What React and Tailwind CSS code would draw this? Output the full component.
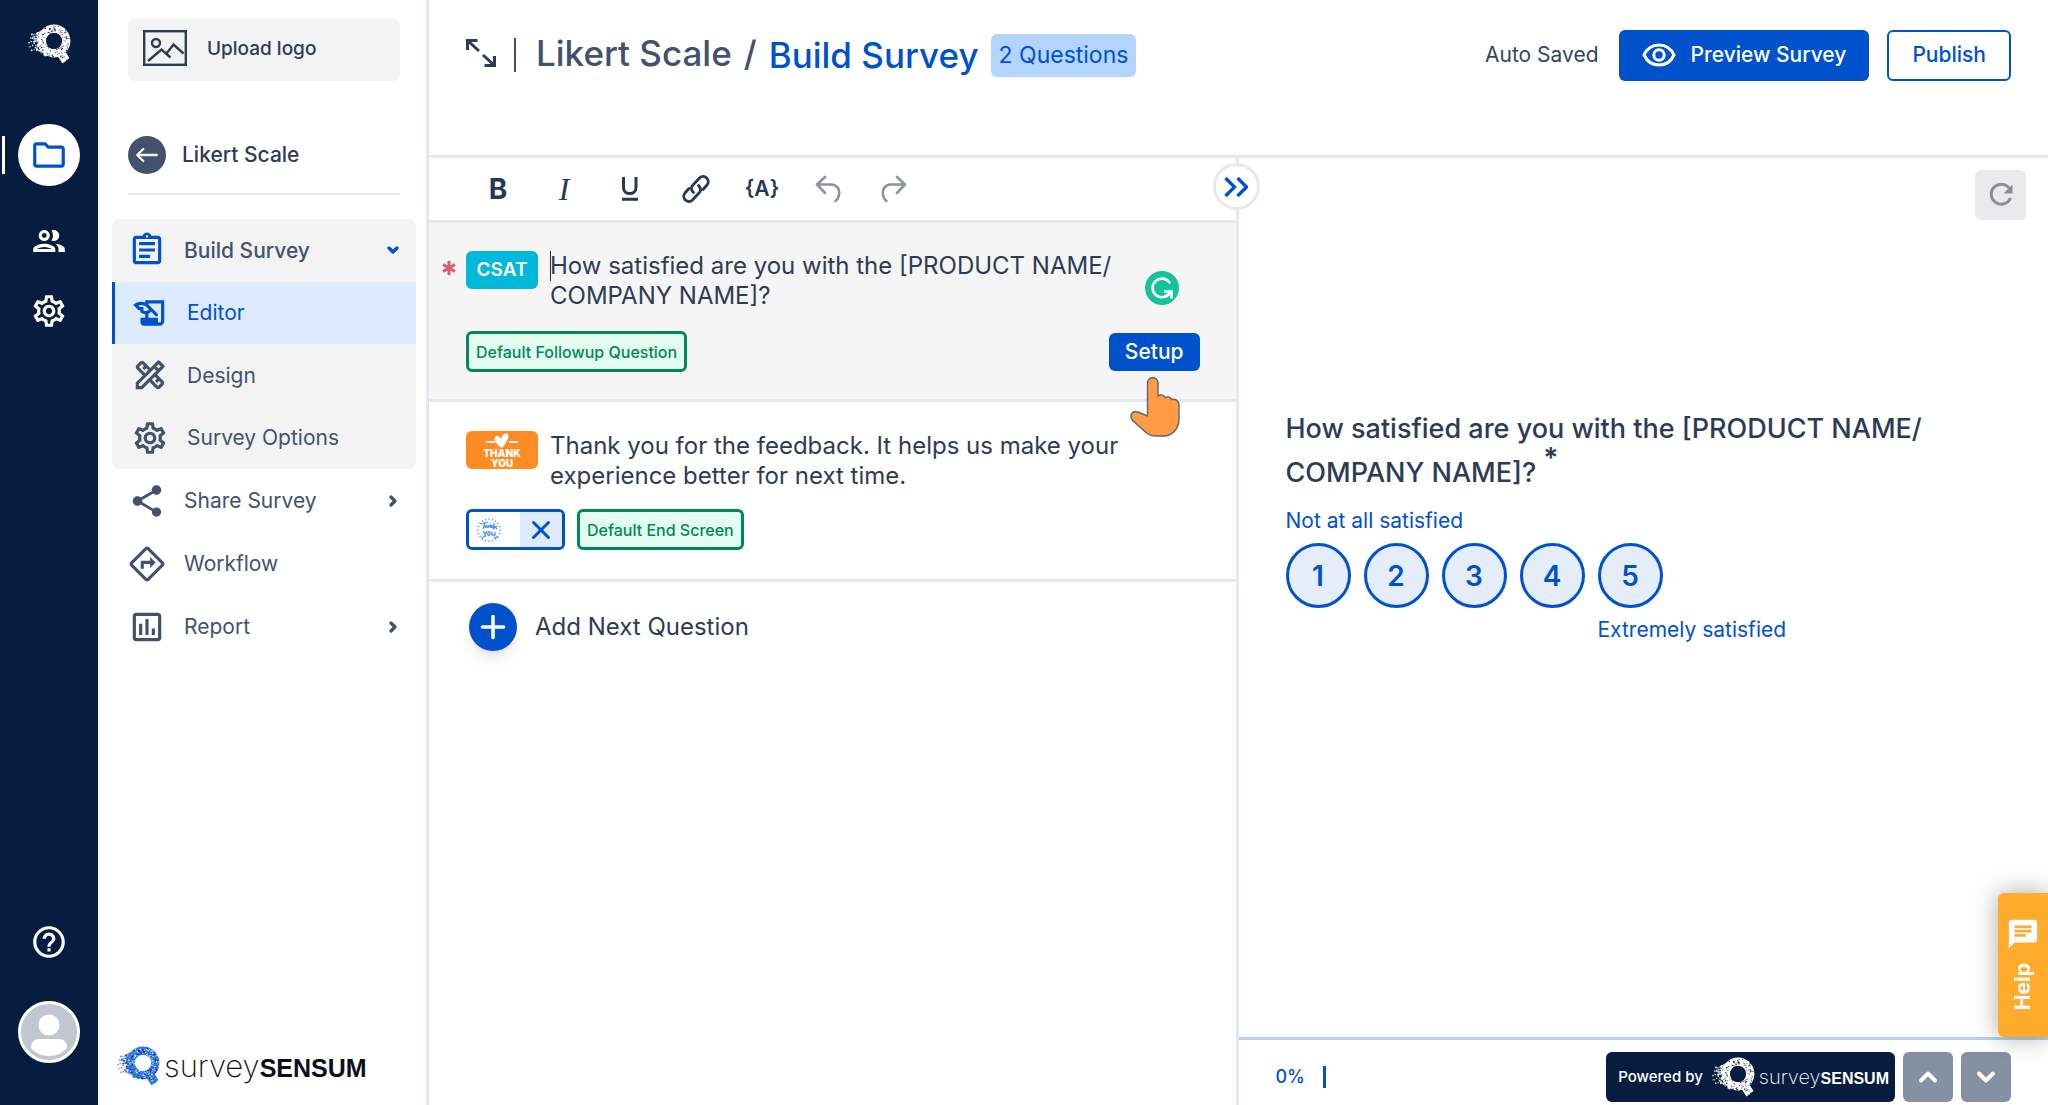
import { useState } from "react";
import clsx from "clsx";
import {
  MdOutlineFolder,
  MdOutlineGroup,
  MdOutlineSettings,
  MdHelpOutline,
  MdOutlineAssignment,
  MdOutlineHistoryEdu,
  MdOutlineDesignServices,
  MdShare,
  MdOutlineDirections,
  MdOutlineAssessment,
  MdChat,
} from "react-icons/md";
import { BsArrowLeft } from "react-icons/bs";
import { ChevronDown, ChevronRight, ChevronUp, Plus, X } from "lucide-react";

// small seeded generator so the logo specks stay the same on every render
function makeRandom(seed) {
  let s = seed;
  return () => {
    s = (s * 16807) % 2147483647;
    return s / 2147483647;
  };
}

function buildSpecks() {
  const rnd = makeRandom(42);
  const trail = [];
  const ring = [];
  for (let i = 0; i < 240; i++) {
    const t = rnd();
    const x = 1 + Math.sqrt(t) * 19;
    const spread = 8 + t * 7;
    const y = 17.5 + (rnd() * 2 - 1) * spread;
    trail.push({ x, y, s: 0.7 + rnd() * 0.9, c: Math.floor(rnd() * 3) });
  }
  for (let i = 0; i < 300; i++) {
    const a = rnd() * Math.PI * 2;
    const r = 8.5 + rnd() * 7.5;
    ring.push({
      x: 26.5 + Math.cos(a) * r,
      y: 16.5 + Math.sin(a) * r,
      s: 0.6 + rnd() * 0.6,
      c: Math.floor(rnd() * 3),
    });
  }
  for (let i = 0; i < 30; i++) {
    const t = rnd();
    ring.push({ x: 31 + t * 6 + rnd() * 4, y: 29 + t * 8, s: 0.6 + rnd() * 0.5, c: Math.floor(rnd() * 3) });
  }
  return { trail, ring };
}

const specks = buildSpecks();

function QLogo({ className, light }) {
  const colors = light ? ["#fff", "#fff", "#fff"] : ["#2f80ed", "#0b1f40", "#60a5fa"];
  const holes = light ? ["#071d40", "#fff", "#fff"] : ["#0b1f40", "#ffffff", "#5ba2fb"];
  const base = light ? "#fff" : "#2f7be8";
  return (
    <svg viewBox="0 0 44 40" className={className} aria-hidden="true">
      {specks.trail.map((p, i) => (
        <rect key={i} x={p.x} y={p.y} width={p.s} height={p.s} fill={colors[p.c]} />
      ))}
      <circle cx="27" cy="17" r="12.2" fill="none" stroke={base} strokeWidth="8.4" />
      <path d="M30 31l8-4 4.500 7-7 5.500z" fill={base} />
      {specks.ring.map((p, i) => (
        <rect key={i} x={p.x} y={p.y} width={p.s} height={p.s} fill={holes[p.c]} />
      ))}
      <circle cx="27" cy="17" r="8" fill={light ? "#071d40" : "#fff"} />
    </svg>
  );
}

function ImageIcon() {
  return (
    <svg viewBox="0 0 44 36" className="h-9 w-11" fill="none" stroke="#2d3b55" strokeWidth="2.4" aria-hidden="true">
      <rect x="1.2" y="1.2" width="41.6" height="33.6" />
      <circle cx="13" cy="13" r="4" />
      <path d="M5 31l13.5-11.5 9 8M23.500 23.500L30.500 14.500l10 9" />
    </svg>
  );
}

function ExpandIcon() {
  return (
    <svg viewBox="0 0 30 28" className="h-7 w-[30px]" fill="none" stroke="#2d3b55" strokeWidth="3" aria-hidden="true">
      <path d="M11.500 1.500H1.500V11M2 2l11 10M18.500 26.500h10V17M28 26L17 16" />
    </svg>
  );
}

function UndoIcon({ flip }) {
  return (
    <svg
      viewBox="0 0 26 28"
      className={clsx("h-7 w-[26px]", flip && "-scale-x-100")}
      fill="none"
      stroke="#8d949e"
      strokeWidth="2.6"
      strokeLinecap="round"
      strokeLinejoin="round"
      aria-hidden="true"
    >
      <path d="M10 2L2 9.500l8 8.500M2 9.500h14c6 0 9 5 8 10-.4 3-1.500 5-3.500 6.500" />
    </svg>
  );
}

function ReloadIcon() {
  return (
    <svg viewBox="0 0 24 24" className="h-6 w-6" aria-hidden="true">
      <path d="M20.500 5.500A10 10 0 1 0 21.500 15" fill="none" stroke="#8b8f94" strokeWidth="3" />
      <path d="M23.500 1.500v9h-9z" fill="#8b8f94" />
    </svg>
  );
}

function EyeIcon() {
  return (
    <svg viewBox="0 0 34 24" className="h-6 w-[34px]" fill="none" stroke="#fff" strokeWidth="3" aria-hidden="true">
      <path d="M2 12C5 5.500 10.500 2 17 2s12 3.500 15 10c-3 6.500-8.500 10-15 10S5 18.500 2 12z" />
      <circle cx="17" cy="12" r="5.200" />
    </svg>
  );
}

function HandIcon() {
  return (
    <svg viewBox="0 0 50 60" className="h-[60px] w-[50px]" aria-hidden="true">
      <path
        d="M17.500 6c0-7 10.500-7 10.500 0v13c3-2 6-1 7 1.500 3-1.500 5.500 0 6.500 2 4-1 7.500 1.500 7.500 5V42c0 10-7 17-15.500 17H26c-4 0-7-1-10-3.500L2.500 43.500C-1.500 38 3 33 8 35l9.500 4z"
        fill="#ff9c43"
        stroke="#5b6472"
        strokeWidth="1.400"
      />
    </svg>
  );
}

function GrammarlyIcon() {
  return (
    <svg viewBox="0 0 34 34" className="size-[34px]" aria-hidden="true">
      <circle cx="17" cy="17" r="17" fill="#15c39a" />
      <path d="M24.500 11.500A9.300 9.300 0 1 0 25 21.500" fill="none" stroke="#fff" strokeWidth="2.600" strokeLinecap="round" />
      <path d="M19 20.500h7.500V27.500" fill="none" stroke="#fff" strokeWidth="2.600" />
    </svg>
  );
}

function HeartMark() {
  return (
    <svg viewBox="0 0 32 16" className="h-4 w-8" aria-hidden="true">
      <path d="M0 10h9M23 10h9" stroke="#fff" strokeWidth="2" />
      <path d="M16 16C9 12 7 6 9.500 4.500c2.500-1.200 4.500.5 5.500 3C15.500 3 19 .5 21.500 1.800 24 4 21 11 16 16z" fill="#fff" />
    </svg>
  );
}

// scribbled "thank you" thumbnail
function ThumbIcon() {
  const rays = Array.from({ length: 20 }, (_, i) => i * 18);
  return (
    <svg viewBox="0 0 24 24" className="size-6" fill="none" stroke="#4b94f2" aria-hidden="true">
      {rays.map((a) => (
        <path key={a} d="M12 0v1.800" strokeWidth="1" transform={`rotate(${a} 12 12)`} />
      ))}
      <path d="M4 6l7-2M8 5L6 11M8 10c1-4 2-3 2 0M11 10c0-3 3-3 2 0M14 10V7l2 3V7M17 5v5l3-2-2 1 2 2" strokeWidth="1.300" />
      <path d="M6 13l2 3 2-3-3 6M11 15c0-2 3-2 2 1s-3 1-2-1M15 14v3h3v-3M4 20l5-2M17 20l4-1" strokeWidth="1.300" />
    </svg>
  );
}

const navItem = "flex size-[62px] items-center justify-center rounded-full";

function IconRail() {
  return (
    <nav className="flex w-[98px] shrink-0 flex-col items-center bg-[#071d40] pb-[42px] text-white">
      <a href="#home" aria-label="Home" className="mt-6">
        <QLogo light className="h-10 w-11" />
      </a>
      <div className="relative mt-[60px] flex w-full justify-center">
        <span className="absolute top-3 left-0.5 h-[38px] w-[3px] bg-white" />
        <a href="#surveys" aria-label="Surveys" className={clsx(navItem, "bg-white text-[#0052cc]")}>
          <MdOutlineFolder size={38} />
        </a>
      </div>
      <a href="#contacts" aria-label="Contacts" className={clsx(navItem, "mt-6")}>
        <MdOutlineGroup size={38} />
      </a>
      <a href="#settings" aria-label="Settings" className={clsx(navItem, "mt-2")}>
        <MdOutlineSettings size={38} />
      </a>
      <div className="mt-auto flex flex-col items-center gap-7">
        <a href="#help" aria-label="Help center" className={navItem}>
          <MdHelpOutline size={38} />
        </a>
        <button aria-label="Account" className="size-[62px] overflow-hidden rounded-full border-[3px] border-white bg-[#c1c7d0]">
          <svg viewBox="0 0 56 56" aria-hidden="true">
            <circle cx="28" cy="21" r="10.5" fill="#fff" />
            <path d="M10 44c0-6 3-9 9-9h18c6 0 9 3 9 9-5 5-10 8-18 8s-14-3-18-8z" fill="#fff" />
          </svg>
        </button>
      </div>
    </nav>
  );
}

const buildItems = [
  { label: "Editor", icon: MdOutlineHistoryEdu, active: true },
  { label: "Design", icon: MdOutlineDesignServices },
  { label: "Survey Options", icon: MdOutlineSettings },
];

const moreItems = [
  { label: "Share Survey", icon: MdShare, more: true },
  { label: "Workflow", icon: MdOutlineDirections },
  { label: "Report", icon: MdOutlineAssessment, more: true },
];

function SurveySidebar() {
  return (
    <aside className="flex w-[331px] shrink-0 flex-col border-r-[3px] border-[#e4e9f1] pr-2.5 pl-3.5 text-[#42526e]">
      <button className="mx-4 mt-[18px] flex h-[63px] items-center gap-5 rounded-lg bg-[#f3f3f3] px-[15px] pb-1 text-[19px] font-medium text-[#2d3b55]">
        <ImageIcon />
        <span className="pt-1">Upload logo</span>
      </button>

      <div className="mx-4 mt-12 flex items-center gap-4 border-b-2 border-[#e6edf5] pb-[19px] pt-[7px]">
        <button aria-label="Back" className="flex size-[38px] items-center justify-center rounded-full bg-[#42526e] text-white">
          <BsArrowLeft size={24} strokeWidth={0.6} />
        </button>
        <h2 className="text-[21px] font-medium text-[#2d3b55]">Likert Scale</h2>
      </div>

      <div className="mt-6 flex h-[250px] flex-col overflow-hidden rounded-lg bg-[#f3f3f3] text-[21px]">
        <button className="flex flex-1 items-center gap-[18px] pr-[15px] pl-4 font-medium">
          <MdOutlineAssignment size={38} className="text-[#0052cc]" />
          Build Survey
          <ChevronDown size={16} strokeWidth={5} className="ml-auto text-[#0052cc]" />
        </button>
        {buildItems.map(({ label, icon: Icon, active }) => (
          <a
            key={label}
            href={`#${label}`}
            className={clsx(
              "flex flex-1 items-center gap-[18px] border-l-[3px] pl-4",
              active ? "border-[#0052cc] bg-[#deebff] text-[#0052cc]" : "border-transparent"
            )}
          >
            <Icon size={38} />
            {label}
          </a>
        ))}
      </div>

      {moreItems.map(({ label, icon: Icon, more }) => (
        <a key={label} href={`#${label}`} className="flex h-[63px] items-center gap-[18px] pr-[15px] pl-4 text-[21px]">
          <Icon size={38} />
          {label}
          {more && <ChevronRight size={16} strokeWidth={5} className="ml-auto" />}
        </a>
      ))}

      <div className="mt-auto mb-4 flex items-center gap-1 pl-1">
        <QLogo className="h-10 w-11" />
        <p className="flex items-baseline text-[#0a0f1a]">
          <span className="text-[31px] font-extralight">survey</span>
          <span className="font-['Liberation_Sans',sans-serif] text-[25px] font-bold">SENSUM</span>
        </p>
      </div>
    </aside>
  );
}

function Header() {
  return (
    <header className="flex h-[158px] shrink-0 items-start border-b-[3px] border-[#e4e9f1] pr-[37px] pl-[37px]">
      <div className="flex h-[110px] items-center">
        <button aria-label="Expand" className="pb-1">
          <ExpandIcon />
        </button>
        <span className="ml-[18px] h-[34px] w-0.5 bg-[#42526e]" />
        <h1 className="ml-5 flex items-center gap-3 text-[35px] font-medium text-[#42526e]">
          <span className="pb-1">Likert Scale</span>
          <span className="pb-1">/</span>
          <span className="text-[#0052cc]">Build Survey</span>
        </h1>
        <span className="ml-3 flex h-[43px] items-center rounded-md bg-[#b3d4ff] px-2 text-[23px] text-[#0052cc]">2 Questions</span>
      </div>
      <div className="ml-auto flex h-[110px] items-center text-[21px]">
        <span className="mr-5 text-[#344563]">Auto Saved</span>
        <button className="flex h-[51px] items-center gap-[15px] rounded-md bg-[#0052cc] px-[23px] font-medium text-white">
          <EyeIcon />
          Preview Survey
        </button>
        <button className="ml-[18px] h-[51px] rounded-md border-2 border-[#0052cc] px-[23px] font-medium text-[#0052cc]">Publish</button>
      </div>
    </header>
  );
}

const toolButton = "flex w-[66px] items-center justify-center";

function Toolbar() {
  return (
    <div className="flex h-[65px] items-center border-b-[3px] border-[#e4e9f1] pl-9 text-[#253858]">
      <button aria-label="Bold" className={toolButton}>
        <span className="text-[28px] font-bold">B</span>
      </button>
      <button aria-label="Italic" className={toolButton}>
        <span className="font-['Liberation_Serif',serif] text-[32px] italic">I</span>
      </button>
      <button aria-label="Underline" className={toolButton}>
        <svg viewBox="0 0 18 24" className="h-6 w-[18px]" fill="none" stroke="currentColor" strokeWidth="3" aria-hidden="true">
          <path d="M2.500 0v10.500c0 8 12.500 8 12.500 0V0M1 22.300h16" />
        </svg>
      </button>
      <button aria-label="Insert link" className={toolButton}>
        <svg viewBox="0 0 30 30" className="size-[30px]" fill="none" stroke="currentColor" strokeWidth="2.800" strokeLinecap="round" aria-hidden="true">
          <path d="M12.500 18.500c-3-3-2.500-5.500-.5-7.500l6.500-7c5-4.500 11.500 2 7.500 7l-4 4.500" />
          <path d="M17.500 11.500c3 3 2.500 5.500.5 7.500l-6.500 7c-5 4.500-11.500-2-7.500-7l4-4.500" />
        </svg>
      </button>
      <button aria-label="Insert variable" className={toolButton}>
        <span className="text-[21px] font-semibold">{"{A}"}</span>
      </button>
      <button aria-label="Undo" className={toolButton}>
        <UndoIcon />
      </button>
      <button aria-label="Redo" className={toolButton}>
        <UndoIcon flip />
      </button>
    </div>
  );
}

const chip = "flex h-[41px] items-center rounded-md border-[3px] border-[#00875a] bg-[#e3fcef] px-[7px] text-base font-medium text-[#00875a]";
const questionBox = "block w-full resize-none overflow-hidden bg-transparent text-[24px] leading-[30px] text-[#2d3b55] outline-none";

function Editor() {
  const [question, setQuestion] = useState("How satisfied are you with the [PRODUCT NAME/\nCOMPANY NAME]?");
  const [thanks, setThanks] = useState("Thank you for the feedback. It helps us make your\nexperience better for next time.");

  return (
    <section className="relative flex flex-col border-r-[3px] border-[#e4e9f1]">
      <Toolbar />
      <button
        aria-label="Collapse editor"
        className="absolute top-[5px] -right-6 z-10 flex size-[47px] items-center justify-center rounded-full border-[3px] border-[#e4e9f1] bg-white"
      >
        <svg viewBox="0 0 24 20" className="h-5 w-6" fill="none" stroke="#0052cc" strokeWidth="3.400" aria-hidden="true">
          <path d="M1.500 1l9 9-9 9M13.500 1l9 9-9 9" />
        </svg>
      </button>

      {/* CSAT question */}
      <article className="relative h-[179px] border-b-[3px] border-[#e4e9f1] bg-[#f5f5f5] pt-7 pr-9 pl-[13px]">
        <div className="flex items-start">
          <svg viewBox="0 0 14 14" className="mt-2.5 mr-2.5 size-3.5" stroke="#de5b6d" strokeWidth="3" aria-hidden="true">
            <path d="M7 0v14M1 3.500l12 7M1 10.500l12-7" />
          </svg>
          <span className="flex h-[38px] w-[72px] items-center justify-center rounded-md bg-[#00b8d9] text-[19px] font-semibold text-white">CSAT</span>
          <div className="relative ml-3 flex-1">
            <span className="absolute top-0 left-0 h-[30px] w-px bg-[#172b4d]" />
            <textarea aria-label="Question text" rows={2} className={questionBox} value={question} onChange={(e) => setQuestion(e.target.value)} />
          </div>
        </div>
        <div className="mt-5 flex items-center justify-between pl-6">
          <span className={chip}>Default Followup Question</span>
          <button className="h-[38px] rounded-md bg-[#0052cc] px-4 text-[21px] leading-none font-medium text-white">Setup</button>
        </div>
        <span className="absolute top-12 right-[57px]">
          <GrammarlyIcon />
        </span>
        <span className="absolute top-[154px] right-14 z-10">
          <HandIcon />
        </span>
      </article>

      {/* end screen */}
      <article className="h-[180px] border-b-[3px] border-[#e4e9f1] pt-[29px] pr-9 pl-[37px]">
        <div className="flex items-start">
          <span className="flex h-[38px] w-[72px] flex-col items-center rounded-md bg-[#ff8b24] pt-px text-[10px] leading-[10px] font-black text-white">
            <HeartMark />
            <span>THANK</span>
            <span>YOU</span>
          </span>
          <div className="ml-3 flex-1">
            <textarea aria-label="Thank you text" rows={2} className={questionBox} value={thanks} onChange={(e) => setThanks(e.target.value)} />
          </div>
        </div>
        <div className="mt-[18px] flex items-center gap-3">
          <div className="flex h-[41px] w-[99px] overflow-hidden rounded-md border-[3px] border-[#0052cc]">
            <span className="flex flex-1 items-center pl-2">
              <ThumbIcon />
            </span>
            <button aria-label="Remove image" className="flex w-[42px] items-center justify-center bg-[#deebff] text-[#0052cc]">
              <X size={30} strokeWidth={2.4} />
            </button>
          </div>
          <span className={chip}>Default End Screen</span>
        </div>
      </article>

      <button className="mt-[21px] ml-10 flex items-center gap-[18px] self-start text-[24px] text-[#2d3b55]">
        <span className="flex size-12 items-center justify-center rounded-full bg-[#0052cc] text-white shadow-lg">
          <Plus size={36} strokeWidth={2.4} />
        </span>
        Add Next Question
      </button>
    </section>
  );
}

function Preview() {
  const [score, setScore] = useState(null);

  return (
    <section className="flex flex-col">
      <div className="flex justify-end pt-3 pr-[22px]">
        <button aria-label="Reload preview" className="flex h-[50px] w-[51px] items-center justify-center rounded-md bg-[#e8eaec]">
          <ReloadIcon />
        </button>
      </div>

      <div className="mt-[187px] pl-[47px] text-[#0052cc]">
        <h2 id="rating-question" className="text-[27px] leading-[44px] font-medium text-[#2d3b55]">
          How satisfied are you with the [PRODUCT NAME/
          <br />
          COMPANY NAME]? <sup className="text-[28px] leading-none font-semibold">*</sup>
        </h2>
        <div role="radiogroup" aria-labelledby="rating-question" className="mt-3 text-[21px] leading-7">
          <p>Not at all satisfied</p>
          <div className="mt-2 flex gap-[13px]">
            {[1, 2, 3, 4, 5].map((n) => (
              <label
                key={n}
                className={clsx(
                  "flex size-[65px] cursor-pointer items-center justify-center rounded-full border-[3px] border-[#0052cc] text-[28px] font-semibold",
                  score === n ? "bg-[#b3d4ff]" : "bg-[#e5edf9]"
                )}
              >
                <input type="radio" name="score" className="sr-only" checked={score === n} onChange={() => setScore(n)} />
                {n}
              </label>
            ))}
          </div>
          <p className="mt-2 pl-[312px]">Extremely satisfied</p>
        </div>
      </div>

      <footer className="mt-auto flex items-center border-t-[3px] border-[#b9cff0] pt-3 pr-[37px] pb-[3px] pl-[37px]">
        <span className="text-lg font-medium text-[#0052cc]">0%</span>
        <span className="ml-[18px] h-[22px] w-[3px] bg-[#0052cc]" />
        <a href="#powered" className="ml-auto flex h-[50px] items-center rounded-md bg-[#071d40] pr-1.5 pl-3 text-white">
          <span className="mr-2 text-[15px] font-medium">Powered by</span>
          <QLogo light className="h-10 w-11" />
          <span className="ml-1 flex items-baseline">
            <span className="text-[20px] font-extralight">survey</span>
            <span className="font-['Liberation_Sans',sans-serif] text-base font-bold">SENSUM</span>
          </span>
        </a>
        <button aria-label="Previous" className="ml-2 flex size-[50px] items-center justify-center rounded-md bg-[#8590a2] text-white">
          <ChevronUp size={28} strokeWidth={3.4} />
        </button>
        <button aria-label="Next" className="ml-2 flex size-[50px] items-center justify-center rounded-md bg-[#8590a2] text-white">
          <ChevronDown size={28} strokeWidth={3.4} />
        </button>
      </footer>
    </section>
  );
}

function App() {
  return (
    <div className="flex h-screen overflow-hidden bg-white font-[Inter,sans-serif]">
      <IconRail />
      <SurveySidebar />
      <main className="flex min-w-0 flex-1 flex-col">
        <Header />
        <div className="grid min-h-0 flex-1 grid-cols-2">
          <Editor />
          <Preview />
        </div>
      </main>

      <button className="fixed right-0 bottom-[68px] z-20 flex h-36 w-[50px] flex-col items-center gap-3 rounded-l-md bg-[#ffab2b] pt-6 text-white shadow-[0_0_24px_rgba(0,0,0,0.35)]">
        <MdChat size={34} />
        <span className="rotate-180 text-[21px] font-bold [writing-mode:vertical-rl]">Help</span>
      </button>
    </div>
  );
}

export default App;
